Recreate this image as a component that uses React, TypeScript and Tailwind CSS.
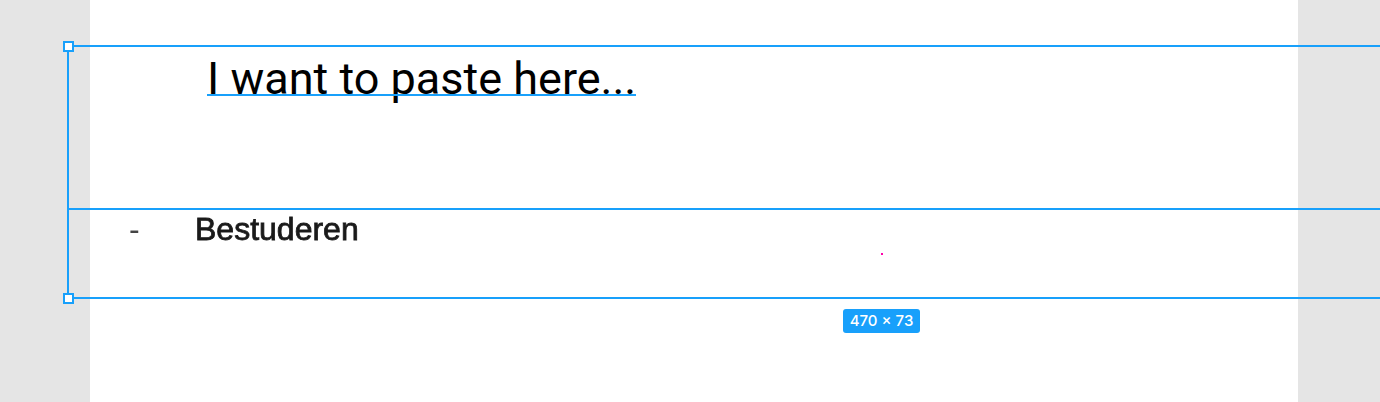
export default function App() {
  return (
    <div className="relative w-[1380px] h-[402px] overflow-hidden bg-[#e5e5e5]">
      {/* artboard */}
      <div className="ml-[90px] w-[1208px] h-full bg-white flex flex-col">
        <div className="pt-[53px] pl-[117px] h-[209px] shrink-0">
          <span className="relative inline-block font-['Roboto',sans-serif] text-[45px] leading-[52px] text-black">
            I want to paste here...
            <span className="absolute left-0 right-0 top-[41px] h-[2px] bg-[#18a0fb]" />
          </span>
        </div>
        <div className="flex font-['Liberation_Sans',Arial,sans-serif] text-[32px] leading-[40px] text-[#1a1a1a] blur-[0.6px]">
          <span className="pl-[39px] w-[105px] text-[#444]">-</span>
          <span className="[-webkit-text-stroke:0.8px_#1a1a1a]">Bestuderen</span>
        </div>
      </div>

      {/* selection overlay */}
      <div className="absolute left-[68px] top-[45px] right-0 h-[2px] bg-[#18a0fb]" />
      <div className="absolute left-[68px] top-[208px] right-0 h-[2px] bg-[#18a0fb]" />
      <div className="absolute left-[68px] top-[297px] right-0 h-[2px] bg-[#18a0fb]" />
      <div className="absolute left-[67px] top-[46px] w-[2px] h-[252px] bg-[#18a0fb]" />
      <div className="absolute left-[63px] top-[41px] w-[11px] h-[11px] bg-white border-2 border-[#18a0fb]" />
      <div className="absolute left-[63px] top-[293px] w-[11px] h-[11px] bg-white border-2 border-[#18a0fb]" />

      <div className="absolute left-[881px] top-[253px] w-[2px] h-[2px] bg-[#ff00aa]" />

      <div className="absolute left-[843px] top-[309px] w-[77px] h-[24px] rounded-[3px] bg-[#18a0fb] flex items-center justify-center font-['Inter',sans-serif] text-[15px] font-medium text-white">
        470 × 73
      </div>
    </div>
  )
}
